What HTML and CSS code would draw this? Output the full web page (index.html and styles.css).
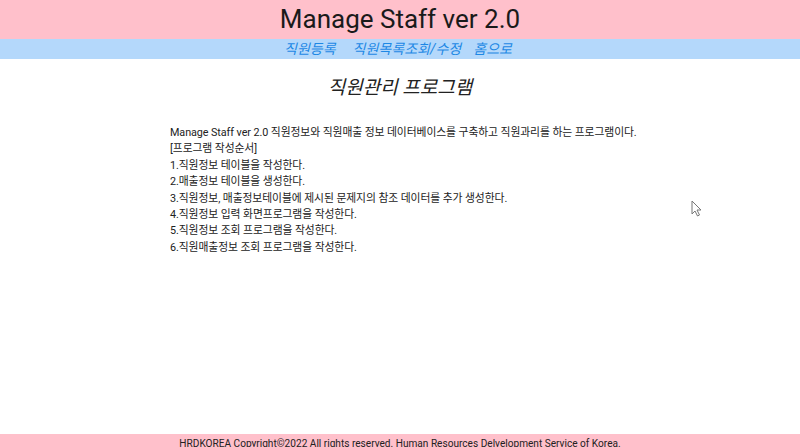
FILE: index.html
```html
<!DOCTYPE html>
<html lang="ko">
<head>
<meta charset="utf-8">
<title>Manage Staff ver 2.0</title>
<link rel="stylesheet" href="styles.css">
</head>
<body>
<div class="page">
  <header class="top">
    <h1 class="title">Manage Staff ver 2.0</h1>
  </header>
  <nav class="menu">
    <a href="#">직원등록</a>
    <a href="#">직원목록조회/수정</a>
    <a href="#" class="home">홈으로</a>
  </nav>
  <main class="content">
    <h2 class="heading">직원관리 프로그램</h2>
    <div class="desc">
      <p>Manage Staff ver 2.0 직원정보와 직원매출 정보 데이터베이스를 구축하고 직원과리를 하는 프로그램이다.</p>
      <p>[프로그램 작성순서]</p>
      <p>1.직원정보 테이블을 작성한다.</p>
      <p>2.매출정보 테이블을 생성한다.</p>
      <p>3.직원정보, 매출정보테이블에 제시된 문제지의 참조 데이터를 추가 생성한다.</p>
      <p>4.직원정보 입력 화면프로그램을 작성한다.</p>
      <p>5.직원정보 조회 프로그램을 작성한다.</p>
      <p>6.직원매출정보 조회 프로그램을 작성한다.</p>
    </div>
  </main>
  <footer class="bottom">HRDKOREA Copyright&copy;2022 All rights reserved. Human Resources Delvelopment Service of Korea.</footer>
</div>
<svg class="cursor" width="12" height="18" viewBox="0 0 12 18"><path d="M1 1 L1 14 L4 11 L6.5 16 L8.5 15 L6 10 L10 10 Z" fill="#fff" stroke="#777" stroke-width="1"/></svg>
</body>
</html>
```
FILE: styles.css
```css
html, body {
  margin: 0;
  padding: 0;
  background: #ffffff;
}
body {
  font-family: "Roboto", "Noto Sans CJK KR", sans-serif;
  color: #222;
  overflow: hidden;
}
.page {
  display: flex;
  flex-direction: column;
  height: 447px;
}
.top {
  background: #ffc0cb;
  height: 39px;
  display: flex;
  align-items: center;
  justify-content: center;
}
.title {
  margin: 0;
  font-size: 26px;
  font-weight: 400;
  color: #1a1a1a;
  line-height: 39px;
}
.menu {
  background: #b4d8fb;
  height: 20px;
  display: flex;
  justify-content: center;
  align-items: center;
  gap: 17px;
  padding-right: 4px;
}
.menu a {
  color: #1e88e5;
  text-decoration: none;
  font-style: italic;
  font-size: 14px;
  line-height: 20px;
}
.menu .home {
  margin-left: -5px;
}
.content {
  flex: 1;
  padding-top: 14px;
}
.heading {
  margin: 0 0 22px;
  text-align: center;
  font-style: italic;
  font-weight: 400;
  font-size: 19px;
  line-height: 30px;
  color: #222;
}
.desc {
  padding-left: 170px;
  font-size: 10.8px;
  letter-spacing: -0.08px;
  line-height: 16.4px;
  color: #222;
}
.desc p {
  margin: 0;
}
.bottom {
  background: #ffc0cb;
  height: 13px;
  text-align: center;
  font-size: 10.1px;
  line-height: 20px;
  color: #222;
  overflow: hidden;
}
.cursor {
  position: absolute;
  left: 691px;
  top: 200px;
}
```
